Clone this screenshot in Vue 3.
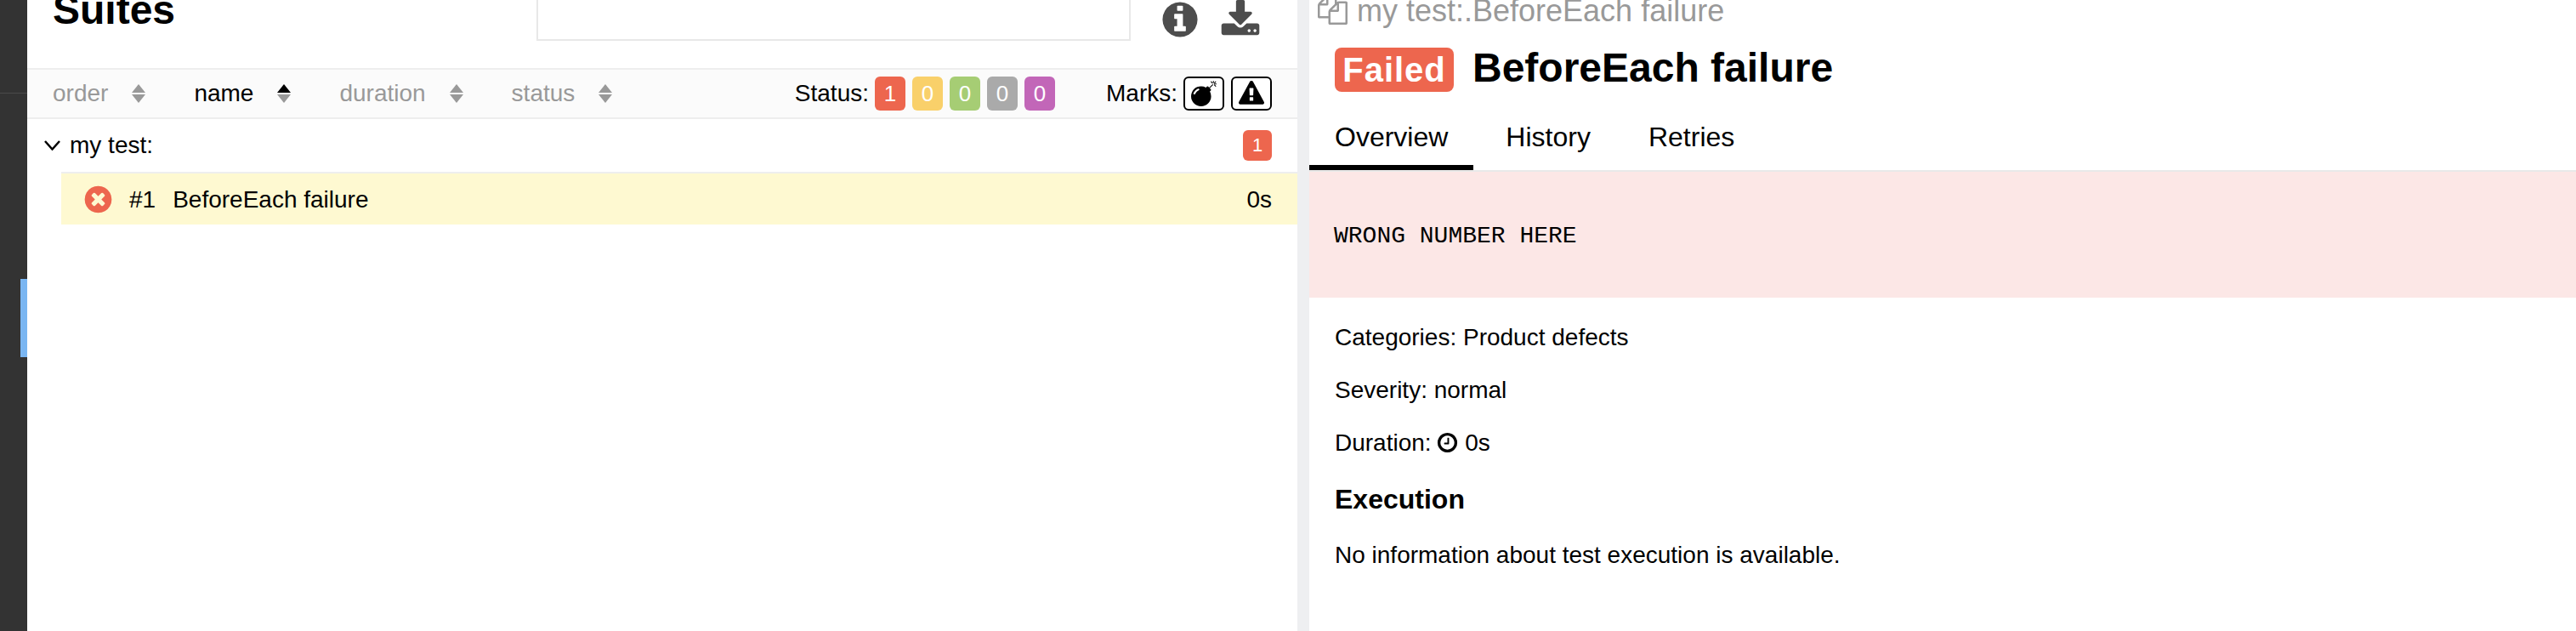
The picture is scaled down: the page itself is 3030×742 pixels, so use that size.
<template>
  <div class="app">
    <nav class="side-nav">
      <div class="side-nav-top"></div>
      <div class="side-nav-marker"></div>
    </nav>

    <section class="suites">
      <header class="suites-head">
        <h2 class="suites-title">Suites</h2>
        <div class="search"></div>
        <svg class="head-icon info-icon" viewBox="0 0 1792 1792"><path :d="icons.info" /></svg>
        <svg class="head-icon" viewBox="0 0 1792 1792"><path :d="icons.download" /></svg>
      </header>

      <div class="sort-bar">
        <div class="sort-cols">
          <div v-for="col in columns" :key="col.name" class="sort-col" :class="{ active: col.active }">
            <span>{{ col.name }}</span>
            <svg class="sort-icon" viewBox="0 0 16 22">
              <path class="sort-up" d="M8 0 L16 10 H0 Z" />
              <path d="M0 12 H16 L8 22 Z" />
            </svg>
          </div>
        </div>
        <div class="filter status-filter">
          <span class="filter-label">Status:</span>
          <span v-for="(s, i) in statuses" :key="i" class="badge" :style="{ background: s.color }">{{ s.count }}</span>
        </div>
        <div class="filter marks-filter">
          <span class="filter-label">Marks:</span>
          <span class="mark-btn"><svg viewBox="0 0 1792 1792"><path :d="icons.bomb" /></svg></span>
          <span class="mark-btn"><svg viewBox="0 0 1792 1792"><path :d="icons.warning" /></svg></span>
        </div>
      </div>

      <div class="group-row">
        <svg class="chevron" viewBox="0 0 19 12"><path d="M1 1 L9.5 10.5 L18 1" /></svg>
        <span class="group-name">my test:</span>
        <span class="group-count">1</span>
      </div>

      <div class="test-row">
        <svg class="fail-icon" viewBox="0 0 1792 1792"><path :d="icons.failed" /></svg>
        <span class="test-order">#1</span>
        <span class="test-name">BeforeEach failure</span>
        <span class="test-time">0s</span>
      </div>
    </section>

    <div class="gutter"></div>

    <section class="details">
      <div class="path-row">
        <svg class="copy-icon" viewBox="0 0 1792 1792"><path :d="icons.copy" /></svg>
        <span>my test:.BeforeEach failure</span>
      </div>
      <div class="title-row">
        <span class="status-label">Failed</span>
        <h2 class="test-title">BeforeEach failure</h2>
      </div>
      <div class="tabs">
        <div v-for="(tab, i) in tabs" :key="tab" class="tab" :class="{ active: i === 0 }">{{ tab }}</div>
      </div>
      <div class="error-block">WRONG NUMBER HERE</div>
      <div class="overview">
        <p>Categories: Product defects</p>
        <p>Severity: normal</p>
        <p class="duration">
          Duration:
          <svg class="clock" viewBox="0 0 1792 1792"><path :d="icons.clock" /></svg>
          0s
        </p>
        <h3>Execution</h3>
        <p>No information about test execution is available.</p>
      </div>
    </section>
  </div>
</template>

<script setup>
const columns = [
  { name: 'order' },
  { name: 'name', active: true },
  { name: 'duration' },
  { name: 'status' },
];

const statuses = [
  { count: 1, color: '#ed664e' },
  { count: 0, color: '#f9d06a' },
  { count: 0, color: '#a6cd74' },
  { count: 0, color: '#aaaaaa' },
  { count: 0, color: '#c266b8' },
];

const tabs = ['Overview', 'History', 'Retries'];

const icons = {
  info: 'M1152 1376v-160q0-14-9-23t-23-9h-96v-512q0-14-9-23t-23-9h-320q-14 0-23 9t-9 23v160q0 14 9 23t23 9h96v320h-96q-14 0-23 9t-9 23v160q0 14 9 23t23 9h448q14 0 23-9t9-23zm-128-896v-160q0-14-9-23t-23-9h-192q-14 0-23 9t-9 23v160q0 14 9 23t23 9h192q14 0 23-9t9-23zm640 416q0 209-103 385.5t-279.5 279.5-385.5 103-385.5-103-279.5-279.5-103-385.5 103-385.5 279.5-279.5 385.5-103 385.5 103 279.5 279.5 103 385.5z',
  download: 'M1344 1344q0-26-19-45t-45-19-45 19-19 45 19 45 45 19 45-19 19-45zm256 0q0-26-19-45t-45-19-45 19-19 45 19 45 45 19 45-19 19-45zm128-224v320q0 40-28 68t-68 28h-1472q-40 0-68-28t-28-68v-320q0-40 28-68t68-28h465l135 136q58 56 136 56t136-56l136-136h464q40 0 68 28t28 68zm-325-569q17 41-14 70l-448 448q-18 19-45 19t-45-19l-448-448q-31-29-14-70 17-39 59-39h256v-448q0-26 19-45t45-19h256q26 0 45 19t19 45v448h256q42 0 59 39z',
  bomb: 'M571 589q-10-25-34-35t-49 0q-108 44-191 127t-127 191q-10 25 0 49t35 34q13 5 24 5 42 0 60-40 34-84 98.5-148.5t148.5-98.5q25-11 35-35t0-49zm942-356l46 46-244 243 68 68q19 19 19 45.5t-19 45.5l-64 64q89 161 89 343 0 143-55.5 273.5t-150 225-225 150-273.5 55.5-273.5-55.5-225-150-150-225-55.5-273.5 55.5-273.5 150-225 225-150 273.5-55.5q182 0 343 89l64-64q19-19 45.5-19t45.5 19l68 68zm8-56q-10 10-22 10-13 0-23-10l-91-90q-9-10-9-23t9-23q10-9 23-9t23 9l90 91q10 9 10 22.5t-10 22.5zm230 230q-11 9-23 9t-23-9l-90-91q-10-9-10-22.5t10-22.5q9-10 22.5-10t22.5 10l91 90q9 10 9 23t-9 23zm41-183q0 14-9 23t-23 9h-96q-14 0-23-9t-9-23 9-23 23-9h96q14 0 23 9t9 23zm-192-192v96q0 14-9 23t-23 9-23-9-9-23v-96q0-14 9-23t23-9 23 9 9 23zm151 55l-91 90q-10 10-22 10-13 0-23-10-10-9-10-22.5t10-22.5l90-91q10-9 23-9t23 9q9 10 9 23t-9 23z',
  warning: 'M1024 1375v-190q0-14-9.5-23.5t-22.5-9.5h-192q-13 0-22.5 9.5t-9.5 23.5v190q0 14 9.5 23.5t22.5 9.5h192q13 0 22.5-9.5t9.5-23.5zm-2-374l18-459q0-12-10-19-13-11-24-11h-220q-11 0-24 11-10 7-10 21l17 457q0 10 10 16.5t24 6.5h185q14 0 23.5-6.5t10.5-16.5zm-14-934l768 1408q35 63-2 126-17 29-46.5 46t-63.5 17h-1536q-34 0-63.5-17t-46.5-46q-37-63-2-126l768-1408q17-31 47-49t65-18 65 18 47 49z',
  failed: 'M1277 1122q0-26-19-45l-181-181 181-181q19-19 19-45 0-27-19-46l-90-90q-19-19-46-19-26 0-45 19l-181 181-181-181q-19-19-45-19-27 0-46 19l-90 90q-19 19-19 46 0 26 19 45l181 181-181 181q-19 19-19 45 0 27 19 46l90 90q19 19 46 19 26 0 45-19l181-181 181 181q19 19 45 19 27 0 46-19l90-90q19-19 19-46zm387-226q0 209-103 385.5t-279.5 279.5-385.5 103-385.5-103-279.5-279.5-103-385.5 103-385.5 279.5-279.5 385.5-103 385.5 103 279.5 279.5 103 385.5z',
  copy: 'M1696 384q40 0 68 28t28 68v1216q0 40-28 68t-68 28h-960q-40 0-68-28t-28-68v-288h-544q-40 0-68-28t-28-68v-672q0-40 20-88t48-76l408-408q28-28 76-48t88-20h416q40 0 68 28t28 68v328q68-40 128-40h416zm-544 213l-299 299h299v-299zm-640-384l-299 299h299v-299zm196 647l316-316v-416h-384v416q0 40-28 68t-68 28h-416v640h512v-256q0-40 20-88t48-76zm956 804v-1152h-384v416q0 40-28 68t-68 28h-416v640h896z',
  clock: 'M1024 544v448q0 14-9 23t-23 9h-320q-14 0-23-9t-9-23v-64q0-14 9-23t23-9h224v-352q0-14 9-23t23-9h64q14 0 23 9t9 23zm416 352q0-148-73-273t-198-198-273-73-273 73-198 198-73 273 73 273 198 198 273 73 273-73 198-198 73-273zm224 0q0 209-103 385.5t-279.5 279.5-385.5 103-385.5-103-279.5-279.5-103-385.5 103-385.5 279.5-279.5 385.5-103 385.5 103 279.5 279.5 103 385.5z',
};
</script>

<style>
html,
body {
  margin: 0;
  overflow: hidden;
  background: #fff;
}
</style>

<style scoped>
.app {
  display: flex;
  height: 742px;
  overflow: hidden;
  font-family: "Liberation Sans", Arial, sans-serif;
  font-size: 28px;
  color: #000;
}

.side-nav {
  flex: 0 0 32px;
  background: #333;
}
.side-nav-top {
  height: 110px;
  box-sizing: border-box;
  border-bottom: 1px solid #4a4a4a;
}
.side-nav-marker {
  width: 8px;
  height: 92px;
  margin: 218px 0 0 24px;
  background: #7ab6f2;
}

.suites {
  flex: 0 0 1494px;
  display: flex;
  flex-direction: column;
}
.suites-head {
  display: flex;
  align-items: flex-start;
  height: 80px;
}
.suites-title {
  flex: 0 0 569px;
  margin: -12px 0 0;
  padding-left: 30px;
  font-size: 48px;
  line-height: 48px;
  font-weight: 700;
}
.search {
  flex: 0 0 699px;
  height: 48px;
  box-sizing: border-box;
  border: 2px solid #e8e8e8;
  border-top: 0;
}
.head-icon {
  width: 48px;
  height: 48px;
  fill: #4d4d4d;
  margin-left: 23px;
}
.info-icon {
  margin: -1px 0 0 34px;
}

.sort-bar {
  display: flex;
  align-items: center;
  height: 60px;
  box-sizing: border-box;
  padding: 0 30px;
  background: #fbfbfb;
  border-top: 2px solid #eee;
  border-bottom: 2px solid #eee;
}
.sort-cols {
  display: flex;
  gap: 57px;
}
.sort-col {
  display: flex;
  align-items: center;
  gap: 28px;
  color: #999;
}
.sort-col.active {
  color: #000;
}
.sort-icon {
  width: 16px;
  height: 22px;
  fill: #999;
}
.sort-col.active .sort-up {
  fill: #000;
}
.filter {
  display: flex;
  align-items: center;
  gap: 8px;
}
.filter-label {
  margin-right: -1px;
}
.status-filter {
  margin-left: auto;
}
.marks-filter {
  margin-left: 60px;
}
.badge {
  width: 36px;
  height: 40px;
  border-radius: 6px;
  color: #fff;
  font-size: 26px;
  line-height: 40px;
  text-align: center;
}
.mark-btn {
  display: flex;
  align-items: center;
  justify-content: center;
  width: 48px;
  height: 40px;
  box-sizing: border-box;
  border: 2px solid #000;
  border-radius: 6px;
  background: #fff;
}
.mark-btn svg {
  width: 30px;
  height: 30px;
}

.group-row {
  display: flex;
  align-items: center;
  height: 62px;
  padding: 0 30px 0 20px;
}
.chevron {
  width: 19px;
  height: 12px;
  margin-right: 11px;
  fill: none;
  stroke: #000;
  stroke-width: 2.5;
}
.group-count {
  width: 34px;
  height: 36px;
  margin-left: auto;
  border-radius: 6px;
  background: #ed664e;
  color: #fff;
  font-size: 22px;
  line-height: 36px;
  text-align: center;
}

.test-row {
  display: flex;
  align-items: center;
  height: 62px;
  box-sizing: border-box;
  margin-left: 40px;
  padding: 1px 30px 0 25px;
  background: #fef9d1;
  border-top: 2px solid #eee;
}
.fail-icon {
  width: 37px;
  height: 37px;
  fill: #ed664e;
  margin-right: 18px;
}
.test-order {
  margin-right: 20px;
}
.test-time {
  margin-left: auto;
}

.gutter {
  flex: 0 0 14px;
  background: #eeeff1;
}

.details {
  flex: 1;
  display: flex;
  flex-direction: column;
}
.path-row {
  display: flex;
  align-items: flex-start;
  gap: 11px;
  height: 36px;
  margin-top: -5px;
  padding-left: 10px;
  color: #999;
  font-size: 36px;
  line-height: 36px;
}
.copy-icon {
  flex: none;
  width: 35px;
  height: 35px;
  margin-top: -1px;
  fill: #999;
}
.title-row {
  display: flex;
  align-items: center;
  gap: 22px;
  height: 52px;
  margin-top: 25px;
  padding-left: 30px;
}
.status-label {
  width: 140px;
  height: 52px;
  border-radius: 8px;
  background: #ed664e;
  color: #fff;
  font-size: 40px;
  font-weight: 700;
  line-height: 52px;
  letter-spacing: 1px;
  text-align: center;
}
.test-title {
  margin: -4px 0 0;
  font-size: 48px;
  font-weight: 700;
  line-height: 52px;
}
.tabs {
  display: flex;
  gap: 8px;
  margin-top: 33px;
  border-bottom: 2px solid #e9e9e9;
}
.tab {
  padding: 0 30px 13px;
  font-size: 32px;
  line-height: 40px;
  border-bottom: 6px solid transparent;
}
.tab.active {
  border-bottom-color: #000;
}
.error-block {
  display: flex;
  align-items: center;
  height: 146px;
  padding: 2px 0 0 29px;
  background: #fce7e6;
  font-family: "Liberation Mono", "Courier New", monospace;
  font-size: 28px;
}
.overview {
  display: flex;
  flex-direction: column;
  gap: 30px;
  padding: 31px 30px 0;
}
.overview p {
  margin: 0;
  line-height: 32px;
}
.overview h3 {
  margin: 0;
  font-size: 32px;
  line-height: 40px;
  font-weight: 700;
}
.clock {
  width: 27px;
  height: 27px;
  margin: 0 -1px 0 -2px;
  vertical-align: -4px;
}
</style>
